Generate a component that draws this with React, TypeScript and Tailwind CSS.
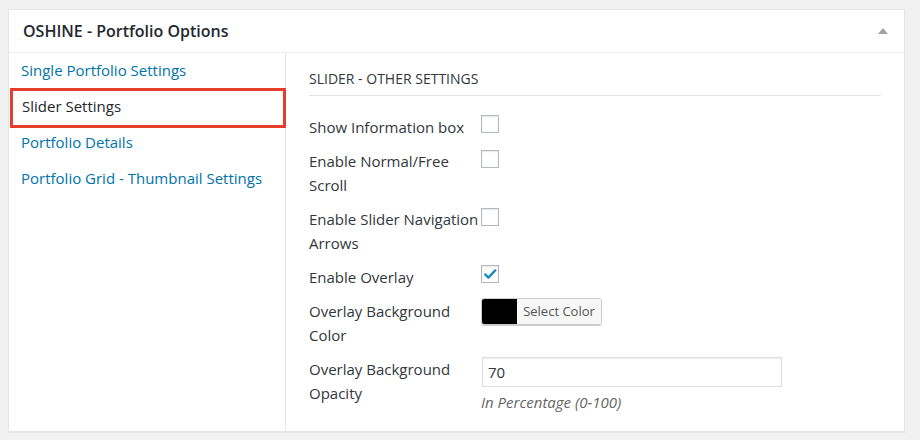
import React from 'react'

const navItems = [
  { label: 'Single Portfolio Settings', active: false },
  { label: 'Slider Settings', active: true },
  { label: 'Portfolio Details', active: false },
  { label: 'Portfolio Grid - Thumbnail Settings', active: false },
]

function Checkbox({ checked = false }: { checked?: boolean }) {
  return (
    <span className="relative flex h-[18px] w-[18px] flex-shrink-0 items-center justify-center border border-[#b4b9be] bg-white shadow-[inset_0_1px_2px_rgba(0,0,0,0.1)]">
      {checked && (
        <svg viewBox="0 0 20 20" className="h-[16px] w-[16px]">
          <path d="M4 10.5 L8 14.5 L16.5 5.5" fill="none" stroke="#1e8cbe" strokeWidth="3" strokeLinecap="round" strokeLinejoin="round" />
        </svg>
      )}
    </span>
  )
}

function Row({ label, children }: { label: React.ReactNode; children: React.ReactNode }) {
  return (
    <div className="flex items-start">
      <div className="w-[172px] flex-shrink-0 text-[15px] leading-[24px] text-[#32373c]">{label}</div>
      <div>{children}</div>
    </div>
  )
}

export default function App() {
  return (
    <div
      className="h-[440px] w-[920px] bg-[#f1f1f1] pl-[8px] pt-[9px]"
      style={{ fontFamily: '"Open Sans", "Noto Sans", sans-serif' }}
    >
      <div className="flex h-[423px] w-[897px] flex-col border border-[#e5e5e5] bg-white shadow-[0_1px_1px_rgba(0,0,0,0.04)]">
        {/* Header */}
        <div className="flex h-[43px] flex-shrink-0 items-center justify-between border-b border-[#eeeeee] pl-[14px] pr-[16px]">
          <h2 className="text-[16px] font-semibold text-[#23282d]">OSHINE - Portfolio Options</h2>
          <span className="h-0 w-0 border-x-[5px] border-b-[6px] border-x-transparent border-b-[#a0a5aa]" />
        </div>

        <div className="flex flex-1">
          {/* Sidebar tabs */}
          <div className="w-[277px] flex-shrink-0 border-r border-[#e5e5e5]">
            {navItems.map(item => (
              <div key={item.label} className="relative pb-[9px] pl-[12px] pt-[7px] text-[15px] leading-[20px]">
                <span className={item.active ? 'pl-[1px] text-[#23282d]' : 'text-[#0073aa]'}>{item.label}</span>
                {item.active && (
                  <span className="absolute -bottom-[3px] -right-[1px] -top-[1px] left-[1px] border-[3px] border-[#e63e2c]" />
                )}
              </div>
            ))}
          </div>

          {/* Settings */}
          <div className="flex-1 px-[23px]">
            <div className="border-b border-[#e5e5e5] pb-[6px] pt-[16px] text-[14px] uppercase leading-[20px] text-[#32373c]">
              Slider - Other Settings
            </div>

            <div className="mt-[19px] flex flex-col gap-[10px]">
              <Row label="Show Information box">
                <Checkbox />
              </Row>
              <Row label={<>Enable Normal/Free<br />Scroll</>}>
                <div className="pt-[1px]"><Checkbox /></div>
              </Row>
              <Row label={<>Enable Slider Navigation<br />Arrows</>}>
                <div className="pt-[1px]"><Checkbox /></div>
              </Row>
              <Row label="Enable Overlay">
                <Checkbox checked />
              </Row>
              <Row label={<>Overlay Background<br />Color</>}>
                <div className="-mt-[1px] flex h-[27px] w-[121px] overflow-hidden rounded-[3px] border border-[#cccccc] shadow-[0_1px_0_#cccccc]">
                  <span className="w-[35px] bg-black" />
                  <span className="flex flex-1 items-center justify-center bg-[#f7f7f7] text-[13px] text-[#555555]">Select Color</span>
                </div>
              </Row>
              <Row label={<>Overlay Background<br />Opacity</>}>
                <div>
                  <div className="ml-[1px] flex h-[30px] w-[300px] items-center border border-[#dddddd] px-[5px] text-[15px] text-[#32373c] shadow-[inset_0_1px_2px_rgba(0,0,0,0.07)]">
                    70
                  </div>
                  <p className="mt-[5px] text-[15px] italic leading-[20px] text-[#666666]">In Percentage (0-100)</p>
                </div>
              </Row>
            </div>
          </div>
        </div>
      </div>
    </div>
  )
}
